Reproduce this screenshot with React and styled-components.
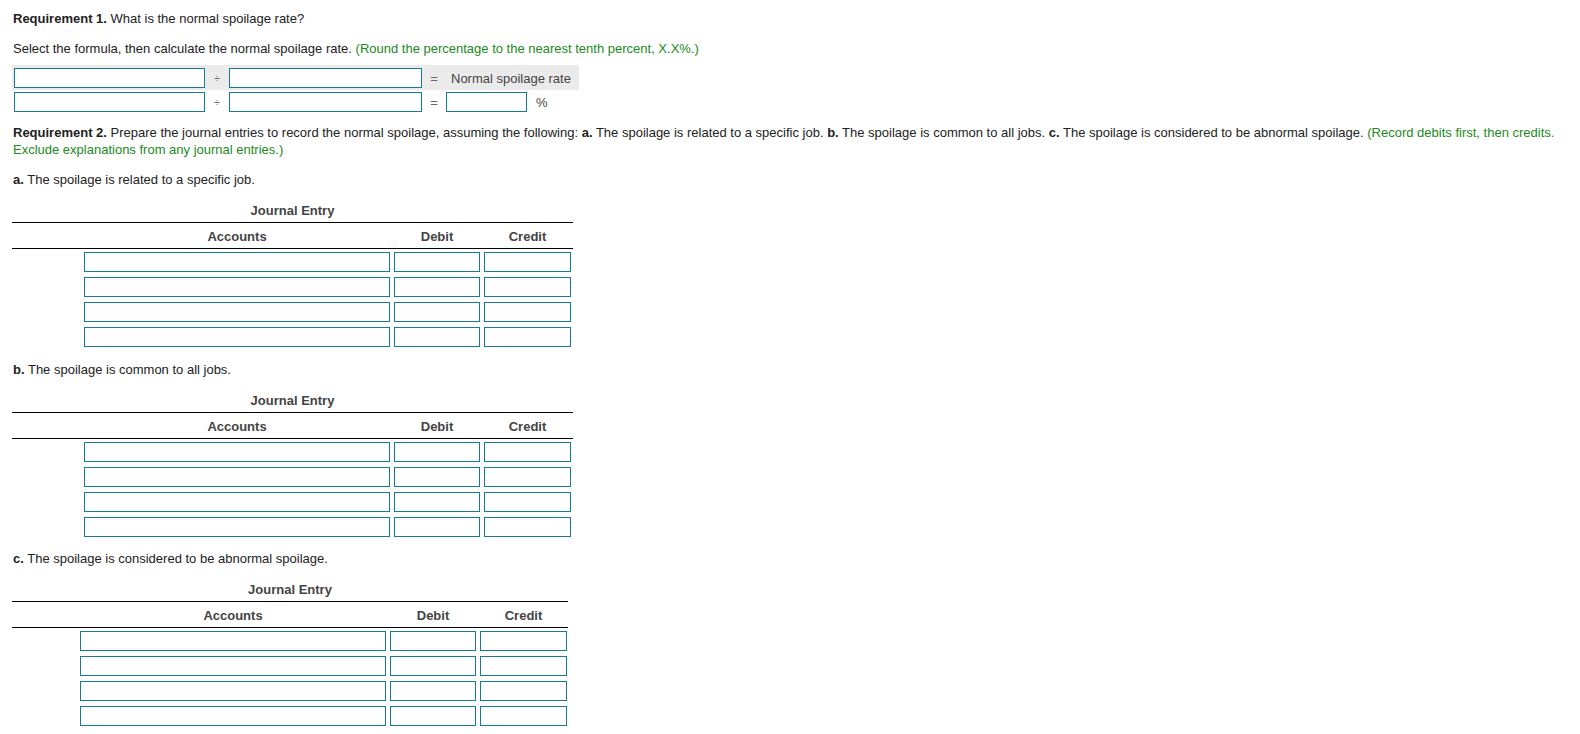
import React from "react";
import styled, { createGlobalStyle } from "styled-components";

const GlobalStyle = createGlobalStyle`
  html, body {
    margin: 0;
    background: #fff;
  }
  body {
    font-family: "Liberation Sans", Arial, sans-serif;
    font-size: 13px;
    line-height: 17px;
    color: #222;
  }
`;

const Page = styled.div`
  padding: 10px 13px;
`;

const Para = styled.p`
  margin: ${(p) => p.$top || 0}px 0 0;
  max-width: 1550px;
`;

const Hint = styled.span`
  color: #228a22;
`;

const Formula = styled.div`
  display: inline-flex;
  flex-direction: column;
  margin: 8px 0 0 -1px;
`;

const FormulaRow = styled.div`
  display: flex;
  align-items: center;
  padding: ${(p) => (p.$shaded ? "3px 8px 2px 2px" : "2px")};
  background: ${(p) => (p.$shaded ? "#ebebeb" : "transparent")};
`;

const Box = styled.input`
  box-sizing: border-box;
  width: ${(p) => p.$w}px;
  height: 20px;
  margin: 0;
  padding: 0 3px;
  border: 1px solid #167c96;
  background: #fff;
  font: inherit;
  outline: none;
`;

const Op = styled.span`
  width: 24px;
  text-align: center;
  color: #666;
  font-size: ${(p) => (p.$small ? 10 : 13)}px;
`;

const Label = styled.span`
  padding-left: 5px;
  color: #444;
`;

const Unit = styled.span`
  margin-left: 9px;
  color: #444;
`;

const Journal = styled.div`
  width: ${(p) => p.$width}px;
  margin: ${(p) => p.$top}px 0 0 -1px;
`;

const JournalTitle = styled.div`
  text-align: center;
  font-weight: bold;
  color: #444;
  padding-bottom: 3px;
  border-bottom: 1px solid #000;
`;

const Grid = styled.div`
  display: grid;
  grid-template-columns: 306px 86px 87px;
  column-gap: 4px;
  padding-left: ${(p) => p.$indent}px;
`;

const HeadRow = styled(Grid)`
  height: 26px;
  padding-top: 1px;
  box-sizing: border-box;
  align-items: center;
  border-bottom: 1px solid #000;
`;

const Head = styled.div`
  text-align: center;
  font-weight: bold;
  color: #444;
`;

const Rows = styled(Grid)`
  row-gap: 5px;
  padding-top: 3px;
`;

function JournalTable({ width, indent, top }) {
  return (
    <Journal $width={width} $top={top}>
      <JournalTitle>Journal Entry</JournalTitle>
      <HeadRow $indent={indent}>
        <Head>Accounts</Head>
        <Head>Debit</Head>
        <Head>Credit</Head>
      </HeadRow>
      <Rows $indent={indent}>
        {[0, 1, 2, 3].map((i) => (
          <React.Fragment key={i}>
            <Box $w={306} />
            <Box $w={86} />
            <Box $w={87} />
          </React.Fragment>
        ))}
      </Rows>
    </Journal>
  );
}

export default function App() {
  return (
    <Page>
      <GlobalStyle />
      <Para>
        <b>Requirement 1.</b> What is the normal spoilage rate?
      </Para>
      <Para $top={13}>
        Select the formula, then calculate the normal spoilage rate.{" "}
        <Hint>(Round the percentage to the nearest tenth percent, X.X%.)</Hint>
      </Para>

      <Formula>
        <FormulaRow $shaded>
          <Box $w={191} />
          <Op $small>÷</Op>
          <Box $w={193} />
          <Op>=</Op>
          <Label>Normal spoilage rate</Label>
        </FormulaRow>
        <FormulaRow>
          <Box $w={191} />
          <Op $small>÷</Op>
          <Box $w={193} />
          <Op>=</Op>
          <Box $w={81} />
          <Unit>%</Unit>
        </FormulaRow>
      </Formula>

      <Para $top={10}>
        <b>Requirement 2.</b> Prepare the journal entries to record the normal
        spoilage, assuming the following: <b>a.</b> The spoilage is related to a
        specific job. <b>b.</b> The spoilage is common to all jobs. <b>c.</b>{" "}
        The spoilage is considered to be abnormal spoilage.{" "}
        <Hint>
          (Record debits first, then credits. Exclude explanations from any
          journal entries.)
        </Hint>
      </Para>

      <Para $top={13}>
        <b>a.</b> The spoilage is related to a specific job.
      </Para>
      <JournalTable width={561} indent={72} top={14} />

      <Para $top={14}>
        <b>b.</b> The spoilage is common to all jobs.
      </Para>
      <JournalTable width={561} indent={72} top={14} />

      <Para $top={13}>
        <b>c.</b> The spoilage is considered to be abnormal spoilage.
      </Para>
      <JournalTable width={556} indent={68} top={14} />
    </Page>
  );
}
